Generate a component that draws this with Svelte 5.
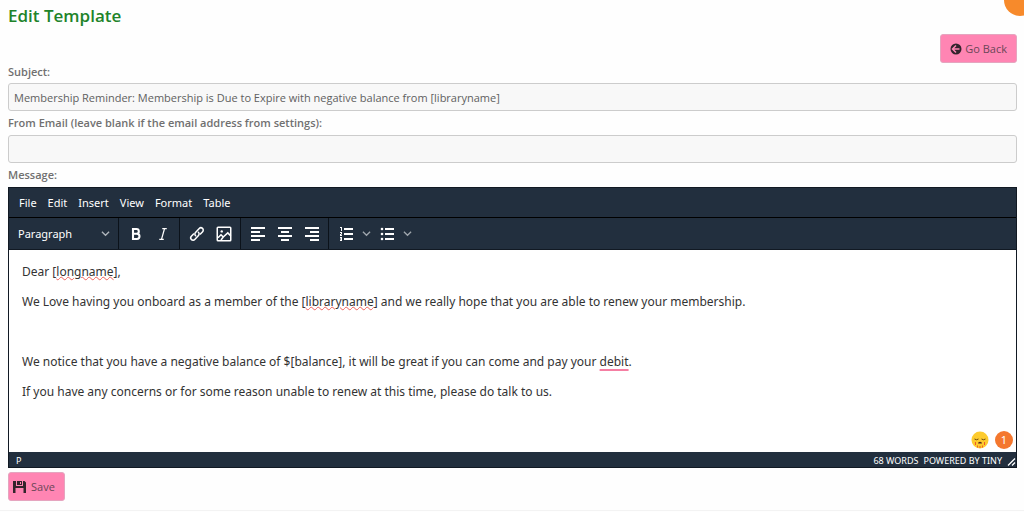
<script lang="ts">
	let subject = $state(
		'Membership Reminder: Membership is Due to Expire with negative balance from [libraryname]'
	);
	let fromEmail = $state('');
	let block = $state('Paragraph');

	const menus = ['File', 'Edit', 'Insert', 'View', 'Format', 'Table'];
	const aligns = [
		{ label: 'Align left', d: 'M5 5h14v2H5zM5 9h9v2H5zM5 13h14v2H5zM5 17h9v2H5z' },
		{ label: 'Align center', d: 'M5 5h14v2H5zM8 9h8v2H8zM5 13h14v2H5zM8 17h8v2H8z' },
		{ label: 'Align right', d: 'M5 5h14v2H5zM10 9h9v2h-9zM5 13h14v2H5zM10 17h9v2h-9z' }
	];
</script>

{#snippet chevron()}
	<svg width="9" height="9" viewBox="0 0 10 10" fill="none" stroke="currentColor" stroke-width="1.4" aria-hidden="true">
		<path d="M1 3l4 4 4-4" />
	</svg>
{/snippet}

<main>
	<header>
		<h1>Edit Template</h1>
		<div class="actions">
			<button class="btn" type="button">
				<svg width="12" height="12" viewBox="0 0 24 24" aria-hidden="true">
					<circle cx="12" cy="12" r="11" fill="#33242c" />
					<path d="M12 5l-7 7 7 7M6 12h13" fill="none" stroke="#ff85b3" stroke-width="3" />
				</svg>
				Go Back
			</button>
		</div>
		<span class="corner" aria-hidden="true"></span>
	</header>

	<form onsubmit={(e) => e.preventDefault()}>
		<label for="subject">Subject:</label>
		<input id="subject" type="text" bind:value={subject} />
		<label for="from">From Email (leave blank if the email address from settings):</label>
		<input id="from" type="text" bind:value={fromEmail} />
		<span class="label" id="message-label">Message:</span>

		<div class="editor">
			<div class="menubar" role="menubar">
				{#each menus as menu}
					<button type="button" role="menuitem">{menu}</button>
				{/each}
			</div>

			<div class="toolbar">
				<div class="group format">
					<select bind:value={block} aria-label="Block format">
						<option>Paragraph</option>
						<option>Heading 1</option>
						<option>Heading 2</option>
					</select>
					{@render chevron()}
				</div>
				<div class="group">
					<button type="button" aria-label="Bold">
						<svg width="18" height="18" viewBox="0 0 24 24" fill="none" stroke="currentColor" stroke-width="2.8" aria-hidden="true">
							<path d="M8 5.4h4.6a3 3 0 0 1 0 6.3H8zM8 11.7h5.2a3.4 3.4 0 0 1 0 6.9H8z" />
						</svg>
					</button>
					<button type="button" aria-label="Italic">
						<svg width="18" height="18" viewBox="0 0 24 24" fill="none" stroke="currentColor" stroke-width="1.6" aria-hidden="true">
							<path d="M11 4.8h6M7 19.2h6M14 5l-4 14" />
						</svg>
					</button>
				</div>
				<div class="group">
					<button type="button" aria-label="Link">
						<svg width="18" height="18" viewBox="0 0 24 24" fill="none" stroke="currentColor" stroke-width="2" stroke-linecap="round" aria-hidden="true">
							<path d="M10.2 14.4a3 3 0 0 1-.2-4.300l5-5.400a3 3 0 0 1 4.500 4.200l-2.900 3.200" />
							<path d="M13.800 9.600a3 3 0 0 1 .2 4.300l-5 5.400a3 3 0 0 1-4.500-4.200l2.900-3.200" />
						</svg>
					</button>
					<button type="button" aria-label="Image">
						<svg width="18" height="18" viewBox="0 0 24 24" fill="none" stroke="currentColor" stroke-width="2" aria-hidden="true">
							<rect x="3" y="3" width="18" height="18" rx="1" />
							<circle cx="9" cy="8.500" r="1.600" fill="currentColor" stroke="none" />
							<path d="M4 17l4-4 3 3 6-5.500 4 4M8 20l3-4" />
						</svg>
					</button>
				</div>
				<div class="group">
					{#each aligns as align}
						<button type="button" aria-label={align.label}>
							<svg width="22" height="20" viewBox="1 2 22 20" fill="currentColor" aria-hidden="true">
								<path d={align.d} />
							</svg>
						</button>
					{/each}
				</div>
				<div class="group">
					<button type="button" aria-label="Numbered list">
						<svg width="20" height="20" viewBox="2 2 20 20" fill="currentColor" aria-hidden="true">
							<path d="M10 6h9v2h-9zM10 11h9v2h-9zM10 16h9v2h-9z" />
							<path d="M6 5h2v4H7V6H6zM6 10h2v2.500H7v.5h1v1H6v-2h1V11H6zM6 15h2v4H6v-1h1v-.5H6v-1h1V16H6z" />
						</svg>
					</button>
					<button class="drop" type="button" aria-label="Numbered list styles">{@render chevron()}</button>
					<button type="button" aria-label="Bullet list">
						<svg width="20" height="20" viewBox="2 2 20 20" fill="currentColor" aria-hidden="true">
							<path d="M10 6h9v2h-9zM10 11h9v2h-9zM10 16h9v2h-9z" />
							<circle cx="7" cy="7" r="1.300" />
							<circle cx="7" cy="12" r="1.300" />
							<circle cx="7" cy="17" r="1.300" />
						</svg>
					</button>
					<button class="drop" type="button" aria-label="Bullet list styles">{@render chevron()}</button>
				</div>
			</div>

			<div class="content">
				<div class="body" contenteditable="true" role="textbox" tabindex="0" aria-multiline="true" aria-labelledby="message-label" spellcheck="false">
					<p>Dear [<span class="typo">longname</span>],</p>
					<p>
						We Love having you onboard as a member of the [<span class="typo">libraryname</span>] and we really hope that you are able to renew your membership.
					</p>
					<p><br /></p>
					<p>
						We notice that you have a negative balance of $[balance], it will be great if you can come and pay your <span class="hint">debit</span>.
					</p>
					<p>If you have any concerns or for some reason unable to renew at this time, please do talk to us.</p>
				</div>
				<div class="badges">
					<svg width="18" height="18" viewBox="0 0 18 18" aria-hidden="true">
						<circle cx="9" cy="9" r="8.500" fill="#fdcb2e" />
						<path d="M3.500 8q2 1.500 4 0M10.500 8q2 1.500 4 0" fill="none" stroke="#6b4a10" />
						<path d="M4.500 11v3M13.500 11v3M6.500 14.500v2M9 15v2M11.500 14.500v2" stroke="#ef5b2a" />
						<path d="M7 12.500a2 1.800 0 0 1 4 0z" fill="#5a2a1c" />
					</svg>
					<span class="count">1</span>
				</div>
			</div>

			<div class="status">
				<span class="path">P</span>
				<span>68 WORDS</span>
				<a href="#tiny">POWERED BY TINY</a>
				<svg width="9" height="9" viewBox="0 0 9 9" stroke="currentColor" stroke-width="1.300" aria-hidden="true">
					<path d="M1 8.500L8 1.500M5 8.500L8 5.500" />
				</svg>
			</div>
		</div>

		<button class="btn save" type="submit">
			<svg width="13" height="12" viewBox="0 0 13 12" fill="#33242c" aria-hidden="true">
				<path d="M0 0h3v5h7V0h1.500L13 1.500V12h-2.500V7h-8v5H0z" />
				<path d="M4 0h5v4H4z" />
				<path d="M7 1h1v2H7z" fill="#ff85b3" />
			</svg>
			Save
		</button>
	</form>
</main>

<style>
	:global(body) {
		margin: 0;
		background: #fefefe;
	}
	main {
		position: relative;
		overflow: hidden;
		padding: 6px 7px 9px 8px;
		border-bottom: 1px solid #f3f3f3;
		font: 11px/20px 'Open Sans', sans-serif;
		color: #666;
	}
	button,
	input,
	select {
		font: inherit;
		color: inherit;
		box-sizing: border-box;
	}
	h1 {
		margin: 0;
		font-size: 17px;
		font-weight: 600;
		line-height: 20px;
		color: #218329;
	}
	.actions {
		display: flex;
		justify-content: flex-end;
		padding-top: 8px;
	}
	/* floating bubble, mostly off the page */
	.corner {
		position: absolute;
		top: -16px;
		right: -12px;
		width: 32px;
		height: 32px;
		border-radius: 50%;
		background: #f78a2b;
	}
	.btn {
		display: flex;
		align-items: center;
		gap: 3px;
		height: 29px;
		padding: 0 9px;
		border: 1px solid #e5a5bf;
		border-radius: 3px;
		background: #ff85b3;
		color: #6b4657;
	}
	form {
		display: flex;
		flex-direction: column;
	}
	label,
	.label {
		height: 24px;
		line-height: 17px;
		font-weight: 600;
		color: #707070;
		box-sizing: border-box;
		padding-top: 3px;
	}
	form > label:first-child {
		height: 20px;
		padding: 0;
	}
	input {
		width: 100%;
		height: 28px;
		padding: 0 5px;
		border: 1px solid #ccc;
		border-radius: 3px;
		background: #f8f8f8;
		color: #606060;
	}
	.editor {
		border: 1px solid #111923;
		background: #fff;
		font-family: 'Noto Sans', 'Open Sans', sans-serif;
	}
	.menubar,
	.toolbar,
	.status {
		display: flex;
		background: #222f3e;
		color: #fff;
	}
	.menubar {
		gap: 1px;
		height: 30px;
		padding: 1px 5px 0;
		box-sizing: border-box;
		border-bottom: 1px solid #000;
	}
	.menubar button,
	.group button {
		border: 0;
		background: none;
		padding: 0 5px;
	}
	.toolbar {
		height: 32px;
		box-sizing: border-box;
		border-bottom: 1px solid #111923;
	}
	.group {
		display: flex;
		align-items: center;
		padding: 0 3px;
		border-right: 1px solid #0b121a;
	}
	.group:last-child {
		border: 0;
	}
	.group button {
		display: flex;
		align-items: center;
		justify-content: center;
		width: 27px;
		height: 28px;
		padding: 0;
	}
	.group .drop {
		width: 14px;
		color: #a0a7ae;
	}
	.format {
		width: 110px;
		box-sizing: border-box;
		padding: 0 8px;
		color: #b0b6bc;
	}
	select {
		flex: 1;
		min-width: 0;
		appearance: none;
		border: 0;
		padding: 0 1px;
		background: #222f3e;
		color: #fff;
	}
	.content {
		position: relative;
		min-height: 202px;
	}
	.body {
		padding: 13px;
		font-size: 12px;
		line-height: 18px;
		color: #333;
		outline: 0;
	}
	p {
		margin: 0 0 12px;
	}
	.typo {
		text-decoration: underline wavy #f0605a 1px;
		text-underline-offset: 0;
	}
	.hint {
		text-decoration: underline #f57fa3 2px;
		text-underline-offset: 3px;
	}
	.badges {
		position: absolute;
		right: 3px;
		bottom: 3px;
		display: flex;
		align-items: center;
		gap: 6px;
	}
	.count {
		width: 18px;
		border-radius: 50%;
		background: #f4772e;
		color: #fff;
		line-height: 18px;
		text-align: center;
	}
	.status {
		gap: 5px;
		height: 15px;
		padding: 0 0 0 7px;
		font-size: 9px;
		line-height: 17px;
	}
	.status .path {
		flex: 1;
	}
	.status a {
		color: inherit;
		text-decoration: none;
	}
	.status svg {
		align-self: flex-end;
		margin-bottom: 1px;
	}
	.save {
		align-self: flex-start;
		gap: 5px;
		padding: 0 9px 0 4px;
		margin-top: 4px;
	}
</style>
